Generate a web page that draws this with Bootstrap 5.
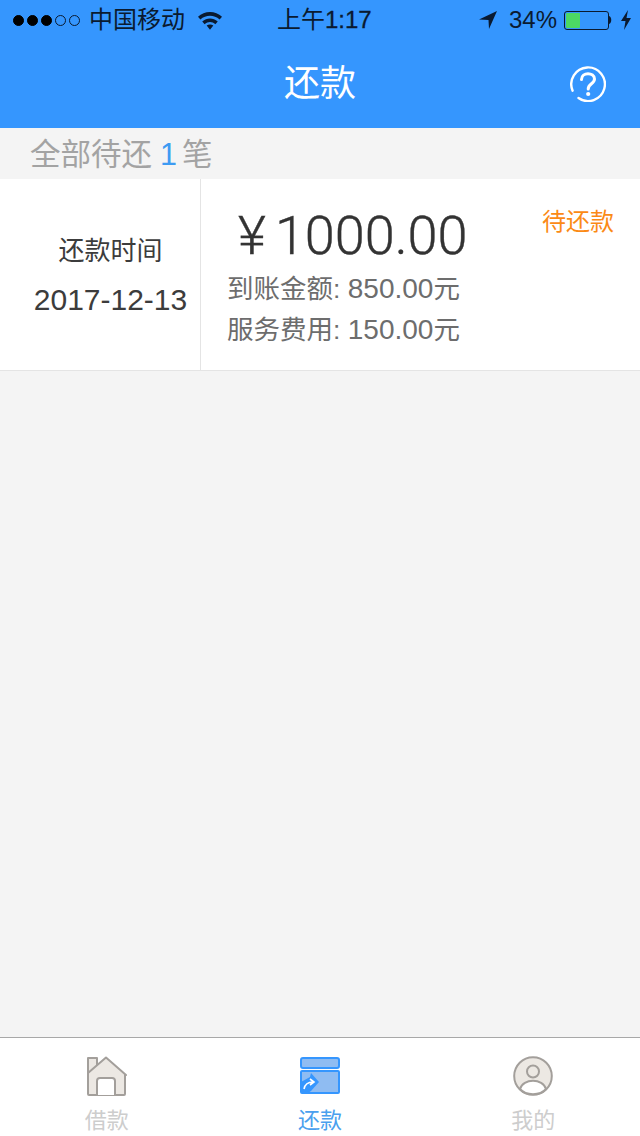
<!DOCTYPE html>
<html lang="zh-CN">
<head>
  <meta charset="UTF-8">
  <meta name="viewport" content="width=device-width, initial-scale=1">
  <title>还款</title>
  <link href="https://cdn.jsdelivr.net/npm/bootstrap@5.3.2/dist/css/bootstrap.min.css" rel="stylesheet">
  <style>
    html, body { height: 100%; }
    body { font-family: "Liberation Sans", "Noto Sans CJK SC", sans-serif; background: #f4f4f4; color: #333; }
    .app-shell { height: 1136px; }
    .top-blue { background: #3596fe; height: 128px; }
    .status-row { height: 40px; color: #0a1a30; font-size: 24px; line-height: 40px; padding: 0 8px 0 13px; }
    .signal-dot { width: 11px; height: 11px; border-radius: 50%; border: 1px solid #0a1a30; display: block; margin-right: 3px; }
    .signal-dot.on { background: #000; border-color: #000; }
    .status-left { width: 264px; }
    .carrier { margin: 0 13px 0 6px; }
    .clock-digits { -webkit-text-stroke: .3px #0a1a30; }
    .status-right { gap: 7px; }
    .batt { width: 45px; height: 19px; border: 1px solid #0a1a30; border-radius: 3px; padding: 1px; display: block; }
    .batt-fill { height: 100%; background: #4cd964; border-radius: 1px; }
    .nav-row { height: 88px; padding-bottom: 1px; }
    .nav-title { color: #fff; font-size: 36px; line-height: 1; }
    .help-btn { right: 34px; top: 50%; transform: translateY(-50%); line-height: 0; }
    .sum-strip { height: 51px; padding-left: 30px; color: #a3a3a3; font-size: 30.5px; line-height: 52px; }
    .sum-num { color: #3d9bf2; margin: 0 5px 0 8px; }
    .bill-row { background: #fff; height: 192px; border-bottom: 1px solid #e4e4e4; }
    .bill-left { width: 201px; border-right: 1px solid #e4e4e4; padding: 4px 0 0 21px; }
    .bill-label { font-size: 26px; line-height: 30px; margin-bottom: 17px; color: #3c3c3c; }
    .bill-date { font-size: 30px; line-height: 34px; color: #3c3c3c; }
    .bill-right { padding: 27px 26px 0 26px; }
    .bill-amount { font-family: Roboto, "Liberation Sans", sans-serif; font-weight: 300; font-size: 54px; line-height: 60px; margin: 0 0 3px 11px; -webkit-text-stroke: .4px #333; }
    .yen-mark { margin-right: 9px; }
    .bill-sub { color: #6d6d6d; font-size: 26.5px; line-height: 41px; height: 41px; }
    .bill-num { font-size: 28px; line-height: 1; }
    .bill-state { color: #fb8a15; font-size: 24px; line-height: 30px; margin-top: 1px; }
    .tab-bar { background: #fff; height: 99px; border-top: 1px solid #a8a8a8; }
    .tab-cell { width: 213.33px; padding-top: 18px; color: #cdcdcd; font-size: 22px; line-height: 28px; }
    .tab-cell.active { color: #4aa0ee; }
    .tab-cell svg { display: block; margin-bottom: 11px; }
  </style>
</head>
<body>
  <div class="app-shell d-flex flex-column">
    <div class="top-blue">
      <div class="status-row d-flex align-items-center">
        <div class="status-left d-flex align-items-center">
          <span class="signal-dot on"></span><span class="signal-dot on"></span><span class="signal-dot on"></span><span class="signal-dot"></span><span class="signal-dot"></span>
          <span class="carrier">中国移动</span>
          <svg width="24" height="19" viewBox="0 0 26 20"><path d="M0 6 C7 -1 19 -1 26 6 L23.4 9 C17.5 3.6 8.5 3.6 2.6 9 Z M4.6 11 C9.6 6.8 16.4 6.8 21.4 11 L18.8 14 C15.2 11 10.8 11 7.2 14 Z M9.4 15.4 C11.6 13.8 14.4 13.8 16.6 15.4 L13 20 Z" fill="#0a1a30"/></svg>
        </div>
        <div>上午<span class="clock-digits">1:17</span></div>
        <div class="status-right d-flex align-items-center ms-auto">
          <svg width="20" height="20" viewBox="0 0 20 20" class="me-1"><path d="M19 1 L1 9.5 L10.5 10 L11 19 Z" fill="#0a1a30"/></svg>
          <span>34%</span>
          <span class="d-flex align-items-center">
            <span class="batt"><span class="batt-fill d-block" style="width: 34%"></span></span>
            <svg width="4" height="8" viewBox="0 0 4 8"><path d="M0 0 C3 1 3 7 0 8 Z" fill="#0a1a30"/></svg>
          </span>
          <svg width="12" height="20" viewBox="0 0 12 20"><path d="M8 0 L1 11 L5.5 11 L4 20 L11 8 L6.5 8 Z" fill="#0a1a30"/></svg>
        </div>
      </div>
      <div class="nav-row position-relative d-flex align-items-center justify-content-center">
        <span class="nav-title">还款</span>
        <span class="help-btn position-absolute">
          <svg width="36" height="36" viewBox="0 0 36 36" fill="none" stroke="#fff" stroke-width="2.4" stroke-linecap="round">
            <path d="M8.5 32 A16.8 16.8 0 1 0 2.6 24.7"/>
            <path d="M11.5 13.5 C11.5 5.5 24.5 6 24.5 13 C24.5 18 18.2 17.5 18.2 23" stroke-width="3"/>
            <circle cx="18.2" cy="28" r="2.1" fill="#fff" stroke="none"/>
          </svg>
        </span>
      </div>
    </div>

    <div class="sum-strip">全部待还<span class="sum-num">1</span>笔</div>

    <div class="bill-row d-flex">
      <div class="bill-left d-flex flex-column justify-content-center align-items-center">
        <div class="bill-label">还款时间</div>
        <div class="bill-date text-nowrap">2017-12-13</div>
      </div>
      <div class="bill-right flex-grow-1 d-flex justify-content-between align-items-start">
        <div>
          <div class="bill-amount"><span class="yen-mark">¥</span>1000.00</div>
          <div class="bill-sub">到账金额: <span class="bill-num">850.00</span>元</div>
          <div class="bill-sub">服务费用: <span class="bill-num">150.00</span>元</div>
        </div>
        <div class="bill-state">待还款</div>
      </div>
    </div>

    <div class="flex-grow-1"></div>

    <div class="tab-bar d-flex">
      <div class="tab-cell d-flex flex-column align-items-center">
        <svg width="40" height="40" viewBox="0 0 40 40">
          <path d="M1 17 L19 1.5 L39 19 L38 19 L38 38 Q38 39 37 39 L2 39 Q1 39 1 38 L1 2 L10 2 L10 9" fill="#ece8e3" stroke="#a39f9b" stroke-width="2" stroke-linejoin="round"/>
          <path d="M10 39 L10 25 Q10 22 13 22 L25 22 Q28 22 28 25 L28 39" fill="#fff" stroke="#a39f9b" stroke-width="2"/>
        </svg>
        <span>借款</span>
      </div>
      <div class="tab-cell active d-flex flex-column align-items-center">
        <svg width="40" height="40" viewBox="0 0 40 40">
          <rect x="1" y="2" width="38" height="10" rx="2" fill="#8fbcf2" stroke="#3596fe" stroke-width="2"/>
          <rect x="1" y="15" width="38" height="22" rx="1" fill="#8fbcf2" stroke="#3596fe" stroke-width="2"/>
          <path d="M1 26 L10 21 L11 17 L19 26 L11 35 L8 37 L1 37 Z" fill="#3596fe"/>
          <path d="M4 33 C5 28 8 26 13 26 M10 23 L14 26 L10 29" fill="none" stroke="#fff" stroke-width="1.6"/>
        </svg>
        <span>还款</span>
      </div>
      <div class="tab-cell d-flex flex-column align-items-center">
        <svg width="40" height="40" viewBox="0 0 40 40">
          <circle cx="20" cy="20" r="18.8" fill="#ece8e3" stroke="#a39f9b" stroke-width="2"/>
          <circle cx="20" cy="15.5" r="6" fill="none" stroke="#a39f9b" stroke-width="2"/>
          <path d="M7 33 C10 22 30 22 33 33 C27 40 13 40 7 33 Z" fill="#fff" stroke="#a39f9b" stroke-width="2"/>
        </svg>
        <span>我的</span>
      </div>
    </div>
  </div>
</body>
</html>
